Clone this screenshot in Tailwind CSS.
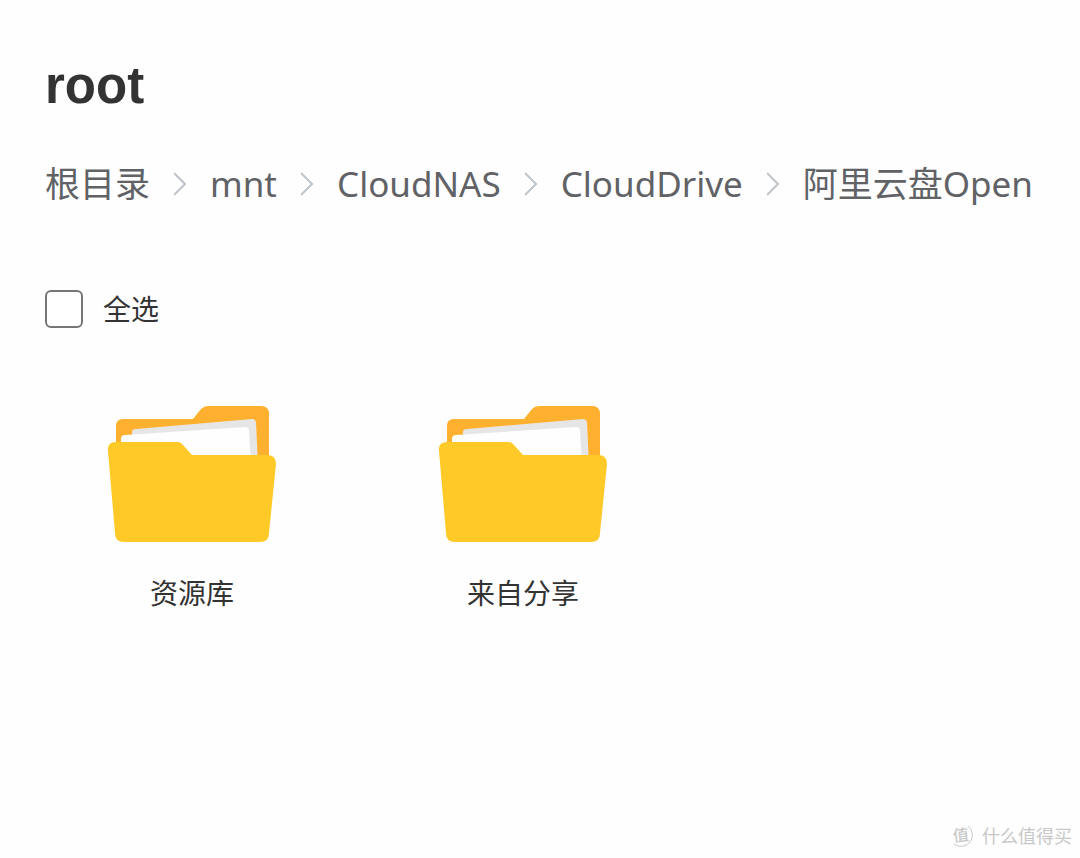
<!DOCTYPE html>
<html lang="zh-CN">
<head>
  <meta charset="UTF-8">
  <meta name="viewport" content="width=device-width, initial-scale=1.0">
  <title>root</title>
  <script src="https://cdn.jsdelivr.net/npm/@tailwindcss/browser@4"></script>
</head>
<body class="min-h-screen flex flex-col bg-[#fefefe] text-[#333333] font-['Noto_Sans','Noto_Sans_CJK_SC',sans-serif]">
  <!-- 文件夹图标 -->
  <svg class="hidden">
    <symbol id="folder" viewBox="0 0 170 138">
      <path fill="#ffb02e" d="M9 60V21q0-7 7-7H86L94 4q3-3 7-3H154q8 0 8 8V60Z"/>
      <path fill="#e6e6e6" d="M25 60V27q0-3 4-3L145 14q3 0 4 3L151 60Z"/>
      <path fill="#fefefe" d="M14 60V34q0-4 4-4L138 22q4 0 4 4L144 60Z"/>
      <path fill="#ffc928" d="M1 46q-1-9 8-9H71q3 0 5 3L85 50H160q9 0 9 9L162 128q0 9-9 9H17q-9 0-9-9Z"/>
    </symbol>
  </svg>

  <main class="flex-1 px-[45px] pt-14">
    <h1 class="text-[51px] leading-[60px] font-bold font-['Liberation_Sans',sans-serif]">root</h1>

    <!-- 路径导航 -->
    <nav class="mt-11 flex items-center gap-6 text-[35px] leading-[48px] text-[#606266] whitespace-nowrap">
      <a href="#">根目录</a>
      <svg class="w-3 h-6 shrink-0" viewBox="0 0 12 24" fill="none" stroke="#c0c4cc" stroke-width="2"><path d="M0 1L11 12L0 23"/></svg>
      <a href="#">mnt</a>
      <svg class="w-3 h-6 shrink-0" viewBox="0 0 12 24" fill="none" stroke="#c0c4cc" stroke-width="2"><path d="M0 1L11 12L0 23"/></svg>
      <a href="#">CloudNAS</a>
      <svg class="w-3 h-6 shrink-0" viewBox="0 0 12 24" fill="none" stroke="#c0c4cc" stroke-width="2"><path d="M0 1L11 12L0 23"/></svg>
      <a href="#">CloudDrive</a>
      <svg class="w-3 h-6 shrink-0" viewBox="0 0 12 24" fill="none" stroke="#c0c4cc" stroke-width="2"><path d="M0 1L11 12L0 23"/></svg>
      <a href="#">阿里云盘Open</a>
    </nav>

    <!-- 全选 -->
    <div class="mt-20 flex items-center gap-5">
      <input type="checkbox" id="selectAll" class="appearance-none size-[38px] rounded-md border-2 border-[#767676] bg-white checked:bg-blue-600">
      <label for="selectAll" class="text-[28px] leading-[42px]">全选</label>
    </div>

    <!-- 文件夹列表 -->
    <ul class="mt-[75px] flex flex-wrap gap-[37px]">
      <li class="w-[294px]">
        <a href="#" class="flex flex-col items-center gap-[30px]">
          <svg class="w-[170px] h-[138px]"><use href="#folder"/></svg>
          <span class="text-[28px] leading-[40px]">资源库</span>
        </a>
      </li>
      <li class="w-[294px]">
        <a href="#" class="flex flex-col items-center gap-[30px]">
          <svg class="w-[170px] h-[138px]"><use href="#folder"/></svg>
          <span class="text-[28px] leading-[40px]">来自分享</span>
        </a>
      </li>
    </ul>
  </main>

  <footer class="flex items-center justify-end gap-2 px-2 pb-2 text-[#c8c8c8]">
    <svg class="size-6 overflow-visible" viewBox="0 0 24 24">
      <path fill="none" stroke="currentColor" stroke-width="1" d="M18 2A11 11 0 1 1 4 20"/>
      <text x="11" y="17" text-anchor="middle" font-size="16" font-weight="500" fill="currentColor" transform="rotate(-6 11 12)">值</text>
    </svg>
    <span class="text-[18px] leading-[28px]">什么值得买</span>
  </footer>
</body>
</html>
